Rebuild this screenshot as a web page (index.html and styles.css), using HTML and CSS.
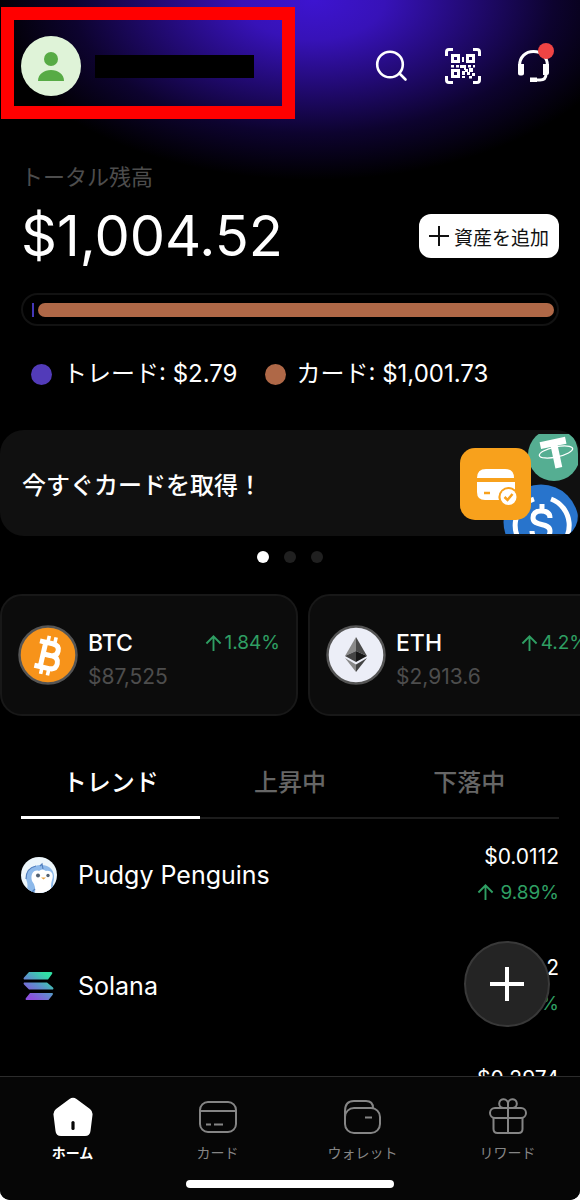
FILE: index.html
```html
<!DOCTYPE html>
<html lang="ja">
<head>
<meta charset="utf-8">
<meta name="viewport" content="width=device-width, initial-scale=1">
<title>ホーム</title>
<link rel="stylesheet" href="styles.css">
</head>
<body>
<div class="app">
  <main class="content">
    <header class="header">
      <button class="profile" type="button" aria-label="プロフィール">
        <svg class="profile-avatar" viewBox="0 0 60 60" aria-hidden="true">
          <circle cx="30" cy="30" r="30" fill="#dff3d8"/>
          <circle cx="30" cy="23" r="7" fill="#57ab45"/>
          <path d="M17 45C17 38 23 34 30 34S43 38 43 45Z" fill="#57ab45"/>
        </svg>
        <span class="profile-name"></span>
      </button>
      <div class="header-actions">
        <button class="icon-button" type="button" aria-label="検索">
          <svg width="36" height="36" viewBox="0 0 36 36" fill="none" stroke="#fff" stroke-width="2.6" stroke-linecap="round"><circle cx="16" cy="16.500" r="12.800"/><path d="M25.500 25.500l6 6"/></svg>
        </button>
        <button class="icon-button" type="button" aria-label="QRコード">
          <svg width="36" height="36" viewBox="0 0 36 36" fill="#fff">
            <path d="M1.500 8V4q0-2.500 2.500-2.500H8M28 1.500h4q2.500 0 2.500 2.500V8M34.500 28v4q0 2.500-2.500 2.500H28M8 34.500H4q-2.500 0-2.500-2.500V28" fill="none" stroke="#fff" stroke-width="3"/>
            <path fill-rule="evenodd" d="M6 6h9v9H6zM9 9v3h3V9zM21 6h9v9h-9zM24 9v3h3V9zM6 21h9v9H6zM9 24v3h3v-3z"/>
            <path d="M17 9h2v5h-2zM6 17h3v2.500H6zM11 17h3v2.500h-3zM15 17h6v5h-2v-2h-4zM23 17h3v2.500h-3zM28 17h2v2.500h-2zM20 21h3v3h-3zM24 20h4v4h-4zM17 23h3v4h-3zM22 24h3v3h-3zM27 25h3v3h-3zM17 28h3v2h-3zM24 28h3v2.500h-3z"/>
          </svg>
        </button>
        <button class="icon-button" type="button" aria-label="サポート">
          <svg width="36" height="36" viewBox="0 0 36 36" fill="none" stroke="#fff" stroke-width="3">
            <path d="M3.500 18C3.500 9 9.500 3.500 17.500 3.500S31.500 9 31.500 18M30 24v2q0 6-6 6H17"/>
            <path d="M2 16h6v9.500q0 2-2 2H4q-2 0-2-2zM27 16h6v9q0 2-2 2h-4zM14 29.500h7v4.500h-7z" fill="#fff" stroke="none"/>
          </svg>
          <span class="alert-dot"></span>
        </button>
      </div>
    </header>

    <section class="balance">
      <h1 class="balance-label">トータル残高</h1>
      <div class="balance-row">
        <p class="balance-total">$1,004.52</p>
        <button class="add-button" type="button">
          <svg width="20" height="20" viewBox="0 0 20 20" stroke="#111" stroke-width="2" aria-hidden="true"><path d="M10 0v20M0 10h20"/></svg>資産を追加
        </button>
      </div>
      <div class="split-bar"><span class="split-trade"></span><span class="split-card"></span></div>
      <ul class="legend">
        <li class="legend-item"><span class="dot dot-trade"></span>トレード: $2.79</li>
        <li class="legend-item"><span class="dot dot-card"></span>カード: $1,001.73</li>
      </ul>
    </section>

    <a class="banner" href="#">
      <span class="banner-text">今すぐカードを取得！</span>
      <svg class="banner-art" width="120" height="106" viewBox="0 0 120 106" aria-hidden="true">
        <defs><clipPath id="art"><path d="M0 4H109Q118 10 118 24V84Q118 98 109 104H0z"/></clipPath></defs>
        <g clip-path="url(#art)">
          <circle cx="94" cy="25" r="26" fill="#55ae92"/>
          <g transform="rotate(-12 96 22)"><path d="M82 9h26v7h-9v22h-7V16H82z" fill="#fff"/><ellipse cx="96" cy="22" rx="17" ry="5" fill="none" stroke="#fff" stroke-width="1.300"/></g>
          <circle cx="81" cy="92" r="37.500" fill="#2874cc"/>
          <path d="M91 69A28 28 0 0 1 96 119M74 69A28 28 0 0 0 68 119" fill="none" stroke="#fff" stroke-width="5"/>
          <path d="M90 88C90 83 87 81 81 81S73 84 73 88C73 97 90 92 90 101C90 106 86 109 81 109S72 106 72 101M82 74v7" fill="none" stroke="#fff" stroke-width="5"/>
        </g>
        <rect x="0" y="18" width="71" height="72" rx="15" fill="#f8a11c"/>
        <path d="M17 48q0-9 9-9h19q9 0 9 9zM17 52h38v8a10 10 0 0 0-16 10H25q-8 0-8-8z" fill="#fff"/>
        <path d="M24 63h6" stroke="#f8a11c" stroke-width="2.500"/>
        <circle cx="48.500" cy="67" r="10" fill="#f8a11c"/>
        <circle cx="48.500" cy="67" r="8" fill="#fff"/>
        <path d="M44.500 67l3 3 5-6" fill="none" stroke="#f8a11c" stroke-width="2.500"/>
      </svg>
    </a>
    <div class="pager"><span class="pager-dot pager-active"></span><span class="pager-dot"></span><span class="pager-dot"></span></div>

    <section class="coins" aria-label="コイン">
      <article class="coin">
        <svg class="coin-logo" viewBox="0 0 60 60" aria-hidden="true">
          <circle cx="30" cy="30" r="28.500" fill="#f7931a" stroke="#555" stroke-width="2.500"/>
          <g transform="rotate(13 30 30)" fill="none" stroke="#fff"><path d="M19 18h13q7 0 7 6t-7 6h-6.500M25.500 30H34q7 0 7 6.500T34 43H19M25 18v25" stroke-width="5"/><path d="M27 11v7M34 11v7M27 43v7M34 43v7" stroke-width="3.600"/></g>
        </svg>
        <div class="coin-info"><h2 class="coin-name">BTC</h2><p class="coin-price">$87,525</p></div>
        <p class="gain coin-gain"><svg class="arrow" viewBox="0 0 18 18" aria-hidden="true"><path d="M9 17V2M1.500 9L9 1.500 16.500 9"/></svg>1.84%</p>
      </article>
      <article class="coin">
        <svg class="coin-logo" viewBox="0 0 60 60" aria-hidden="true">
          <circle cx="30" cy="30" r="28.500" fill="#eceef7" stroke="#555" stroke-width="2.500"/>
          <path d="M30 12L19 31l11-5z" fill="#8a8a8a"/><path d="M30 12l11 19-11-5z" fill="#4a4a4a"/>
          <path d="M19 31l11-5v11z" fill="#444"/><path d="M41 31l-11-5v11z" fill="#171717"/>
          <path d="M19 33l11 6.500V47z" fill="#888"/><path d="M41 33l-11 6.500V47z" fill="#444"/>
        </svg>
        <div class="coin-info"><h2 class="coin-name">ETH</h2><p class="coin-price">$2,913.6</p></div>
        <p class="gain coin-gain"><svg class="arrow" viewBox="0 0 18 18" aria-hidden="true"><path d="M9 17V2M1.500 9L9 1.500 16.500 9"/></svg>4.2%</p>
      </article>
    </section>

    <div class="tabs" role="tablist">
      <button class="tab tab-active" type="button" role="tab" aria-selected="true">トレンド</button>
      <button class="tab" type="button" role="tab" aria-selected="false">上昇中</button>
      <button class="tab" type="button" role="tab" aria-selected="false">下落中</button>
    </div>

    <ul class="market">
      <li class="market-row">
        <svg class="market-logo" viewBox="0 0 36 36" aria-hidden="true">
          <defs><clipPath id="round"><circle cx="18" cy="18" r="18"/></clipPath></defs>
          <g clip-path="url(#round)">
            <path d="M0 0h36v36H0z" fill="#edf6fb"/>
            <path d="M5 36Q8 29 5 22C5 13 11 8 20 8C29 8 34 14 33 22Q31 29 33 36z" fill="#8db9ea"/>
            <path d="M14 36Q15 29 11 24C9 17 13 12 18 14Q21 11 25 14C31 13 33 18 31 23Q29 29 31 36z" fill="#fff"/>
            <path d="M19 9l2-2 1 5M5 22q0-11 10-13M11 35l3-3" fill="none" stroke="#527fbd" stroke-width="1.200"/>
            <circle cx="17" cy="18.500" r="2" fill="#536274"/><circle cx="27" cy="18.500" r="1.700" fill="#536274"/>
            <path d="M20 20.500h5l-2.500 2z" fill="#e9a342"/>
          </g>
        </svg>
        <span class="market-name">Pudgy Penguins</span>
        <div class="market-values"><span class="market-price">$0.0112</span><span class="gain market-gain"><svg class="arrow" viewBox="0 0 18 18" aria-hidden="true"><path d="M9 17V2M1.500 9L9 1.500 16.500 9"/></svg>9.89%</span></div>
      </li>
      <li class="market-row">
        <svg class="market-logo" viewBox="0 0 36 36" aria-hidden="true">
          <defs><linearGradient id="sol" gradientUnits="userSpaceOnUse" x1="8" y1="32" x2="28" y2="4"><stop offset=".1" stop-color="#8b50dc"/><stop offset=".5" stop-color="#5c91cb"/><stop offset=".9" stop-color="#30e0a4"/></linearGradient></defs>
          <path d="M8 4h22q2 0 1 2l-4 5.500H3q-1-1 0-2zM3 14.500h23l6 5q1 1 0 2H8l-5-5q-1-1 0-2zM9 25h22.500q1 1 0 2l-4 5H5q-1-1 0-2z" fill="url(#sol)"/>
        </svg>
        <span class="market-name">Solana</span>
        <div class="market-values"><span class="market-price">$0.2</span><span class="gain market-gain">2%</span></div>
      </li>
      <li class="market-row">
        <span class="market-logo"></span>
        <div class="market-values"><span class="market-price">$0.2974</span><span class="gain market-gain">%</span></div>
      </li>
    </ul>
    <button class="fab" type="button" aria-label="追加"><svg width="34" height="34" viewBox="0 0 34 34" stroke="#fff" stroke-width="4"><path d="M17 0v34M0 17h34"/></svg></button>
  </main>

  <footer class="footer">
    <nav class="nav">
      <a class="nav-item nav-active" href="#">
        <svg class="nav-icon" viewBox="0 0 40 40" aria-hidden="true"><path d="M16.500 2Q20-.5 23.500 2L37 12Q40 14.500 39.500 18L37.500 34Q37 39 32 39H8Q3 39 2.500 34L.5 18Q0 14.500 3 12z" fill="currentColor"/><path d="M20 25.500v6" stroke="#060606" stroke-width="3.200" stroke-linecap="round"/></svg>ホーム
      </a>
      <a class="nav-item" href="#">
        <svg class="nav-icon line" viewBox="0 0 40 40" aria-hidden="true"><rect x="2" y="5" width="36" height="30" rx="8"/><path d="M2 14h36M8 27.500h5M16 27.500h9"/></svg>カード
      </a>
      <a class="nav-item" href="#">
        <svg class="nav-icon line" viewBox="0 0 40 40" aria-hidden="true"><rect x="2" y="11" width="35" height="25" rx="9"/><path d="M2 22V14Q2 4 11 4H23Q30 4 30 11M22 20.500h7"/></svg>ウォレット
      </a>
      <a class="nav-item" href="#">
        <svg class="nav-icon line" viewBox="0 0 40 40" aria-hidden="true"><rect x="2" y="11" width="36" height="10" rx="5"/><path d="M5.500 21v11q0 4 4 4h21q4 0 4-4V21M20 11v25M20 11h-5a4.400 4.400 0 1 1 5-4.400zM20 11h5a4.400 4.400 0 1 0-5-4.400z"/></svg>リワード
      </a>
    </nav>
    <div class="home-indicator"></div>
  </footer>
</div>
</body>
</html>
```
FILE: styles.css
```css
* {
  box-sizing: border-box;
}

body {
  margin: 0;
  background: #fff;
  color: #fff;
  font-family: Inter, "Noto Sans CJK JP", sans-serif;
}

h1, h2, p, ul {
  margin: 0;
  padding: 0;
  font-weight: 400;
}

ul {
  list-style: none;
}

button {
  padding: 0;
  border: 0;
  background: none;
  color: inherit;
  font: inherit;
}

a {
  color: inherit;
  text-decoration: none;
}

svg {
  display: block;
  flex: none;
}

.app {
  display: flex;
  flex-direction: column;
  height: 100vh;
  overflow: hidden;
  border-radius: 0 0 10px 10px;
  background: #000;
}

.content {
  position: relative;
  flex: 1;
  min-height: 0;
  overflow: hidden;
  background: radial-gradient(ellipse 56% 180px at 54% 0, #3d14d0 0%, #3712b8 22%, #220a74 48%, #0d032f 74%, #000 100%) no-repeat;
}

.header {
  display: flex;
  align-items: center;
  justify-content: space-between;
  padding: 7px 28px 0 1px;
}

.profile {
  display: flex;
  align-items: center;
  gap: 14px;
  width: 294px;
  height: 112px;
  padding: 6px 7px 0;
  border: 13px solid #f00;
}

.profile-avatar {
  width: 60px;
  height: 60px;
}

.profile-name {
  width: 159px;
  height: 23px;
  background: #000;
}

.header-actions {
  display: flex;
  gap: 35px;
  padding-top: 6px;
}

.icon-button {
  position: relative;
}

.alert-dot {
  position: absolute;
  top: -5px;
  right: -2px;
  width: 16px;
  height: 16px;
  border-radius: 50%;
  background: #ef4444;
}

.balance {
  padding: 42px 21px 0;
}

.balance-label {
  color: #4d4d4d;
  font-size: 22px;
  line-height: 32px;
}

.balance-row {
  display: flex;
  align-items: center;
  justify-content: space-between;
  height: 86px;
}

.balance-total {
  font-size: 56px;
  line-height: 64px;
}

.add-button {
  display: flex;
  align-items: center;
  justify-content: center;
  gap: 5px;
  width: 140px;
  height: 44px;
  border-radius: 12px;
  background: #fff;
  color: #111;
  font-size: 19px;
  white-space: nowrap;
}

.split-bar {
  display: flex;
  gap: 4px;
  margin-top: 14px;
  padding: 8px 3px 7px 9px;
  border: 2px solid #121212;
  border-radius: 17px;
}

.split-trade {
  width: 2px;
  height: 14px;
  background: #4437b8;
}

.split-card {
  flex: 1;
  height: 14px;
  border-radius: 7px;
  background: #af6847;
}

.legend {
  display: flex;
  gap: 27px;
  padding: 32px 10px 0;
}

.legend-item {
  display: flex;
  align-items: center;
  gap: 11px;
  font-size: 24px;
  line-height: 32px;
  white-space: nowrap;
}

.dot {
  width: 21px;
  height: 21px;
  border-radius: 50%;
}

.dot-trade {
  background: #523bb9;
}

.dot-card {
  background: #af6847;
}

.banner {
  display: flex;
  align-items: center;
  justify-content: space-between;
  margin-top: 40px;
  padding-left: 22px;
  border-radius: 24px;
  background: #101010;
}

.banner-text {
  font-size: 24px;
  font-weight: 500;
}

.pager {
  display: flex;
  justify-content: center;
  gap: 15px;
  padding: 15px 0 31px;
}

.pager-dot {
  width: 12px;
  height: 12px;
  border-radius: 50%;
  background: #202020;
}

.pager-active {
  background: #fff;
}

.coins {
  display: flex;
  gap: 10px;
  overflow: hidden;
}

.coin {
  display: flex;
  flex: none;
  align-items: center;
  gap: 10px;
  width: 298px;
  height: 122px;
  padding: 0 16px;
  border: 2px solid #181818;
  border-radius: 22px;
  background: #0c0c0c;
}

.coin-logo {
  width: 60px;
  height: 60px;
}

.coin-info {
  flex: 1;
  padding-top: 9px;
}

.coin-name {
  font-size: 23px;
  font-weight: 500;
  line-height: 34px;
}

.coin-price {
  color: #4d4d4d;
  font-size: 21px;
  line-height: 34px;
}

.gain {
  display: flex;
  align-items: center;
  color: #2f9f63;
}

.coin-gain {
  align-self: flex-start;
  gap: 3px;
  padding-top: 30px;
  font-size: 19px;
  line-height: 34px;
}

.arrow {
  width: 17px;
  height: 17px;
  fill: none;
  stroke: currentColor;
  stroke-width: 2;
}

.tabs {
  display: grid;
  grid-template-columns: repeat(3, 1fr);
  margin: 28px 21px 0;
  border-bottom: 2px solid #1c1c1c;
}

.tab {
  height: 75px;
  margin-bottom: -2px;
  border-bottom: 3px solid transparent;
  color: #666;
  font-size: 24px;
  font-weight: 500;
}

.tab-active {
  border-color: #fff;
  color: #fff;
}

.market {
  padding: 0 21px;
}

.market-row {
  display: flex;
  align-items: center;
  gap: 21px;
  height: 111px;
}

.market-logo {
  width: 36px;
  height: 36px;
}

.market-name {
  font-size: 25px;
}

.market-values {
  display: flex;
  flex-direction: column;
  align-items: flex-end;
  margin-left: auto;
}

.market-price {
  font-size: 21px;
  font-weight: 400;
  line-height: 36px;
}

.market-gain {
  gap: 6px;
  font-size: 19px;
  line-height: 36px;
}

.fab {
  position: absolute;
  right: 30px;
  bottom: 49px;
  display: flex;
  align-items: center;
  justify-content: center;
  width: 86px;
  height: 86px;
  border: 2px solid #393939;
  border-radius: 50%;
  background: #242424;
}

.footer {
  border-top: 1px solid #2c2c2c;
  background: #060606;
}

.nav {
  display: grid;
  grid-template-columns: repeat(4, 1fr);
}

.nav-item {
  display: flex;
  flex-direction: column;
  align-items: center;
  gap: 5px;
  padding-top: 20px;
  color: #858585;
  font-size: 14px;
  line-height: 22px;
}

.nav-active {
  color: #fff;
  font-weight: 700;
}

.nav-icon {
  width: 40px;
  height: 40px;
}

.line {
  fill: none;
  stroke: currentColor;
  stroke-width: 2;
}

.home-indicator {
  width: 36%;
  height: 8px;
  margin: 16px auto 12px;
  border-radius: 4px;
  background: #fff;
}
```
